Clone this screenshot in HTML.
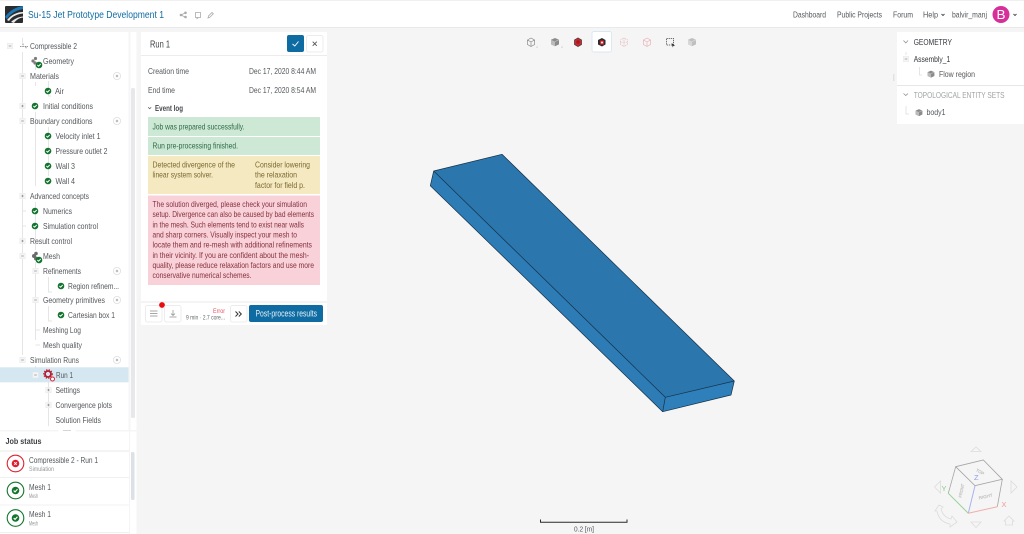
<!DOCTYPE html>
<html><head><meta charset="utf-8"><title>Su-15 Jet Prototype Development 1</title>
<style>
html,body{margin:0;padding:0;width:1024px;height:534px;overflow:hidden;background:#f5f5f5}
svg{display:block}
text{font-family:"Liberation Sans",sans-serif;font-size:8.7px;fill:#54585c;white-space:pre;filter:blur(.2px)}
.n{font-size:8.7px;fill:#54585c}
.b{font-weight:bold}
.g{fill:#2f6b48}.y{fill:#7a6a2e}.r{fill:#87303f}
.s{font-size:6.300px;fill:#94969a}
.l{stroke:#e4e5e6;stroke-width:1;fill:none}
</style></head><body>
<svg width="1024" height="534" viewBox="0 0 1024 534" xmlns="http://www.w3.org/2000/svg">
<defs>
<g id="ok"><circle r="3.3" fill="#14742f"/><path d="M-1.6 0L-.4 1.2L1.7-1.1" stroke="#fff" stroke-width="1" fill="none"/></g>
<g id="plus"><circle r="3.6" fill="#fff" stroke="#dedfe0" stroke-width=".8"/><path d="M-1.3 0H1.3M0-1.3V1.3" stroke="#777" stroke-width=".6"/></g>
<g id="minus"><rect x="-2.7" y="-2.7" width="5.4" height="5.4" fill="#f5f5f5" stroke="#ebebeb" stroke-width=".6"/><path d="M-1.3 0H1.3" stroke="#777" stroke-width=".6"/></g>
<g id="exp"><rect x="-2.7" y="-2.7" width="5.4" height="5.4" fill="#f5f5f5" stroke="#ebebeb" stroke-width=".6"/><path d="M-1.3 0H1.3M0-1.3V1.3" stroke="#777" stroke-width=".6"/></g>
<g id="cube"><path d="M-4-2.2L0-4L4-2.2V2.4L0 4.2L-4 2.4Z" fill="#8b8b8b"/><path d="M-4-2.2L0-.4V4.2L-4 2.4Z" fill="#bbb"/><path d="M0-.4L4-2.2" stroke="#eee" stroke-width=".4"/></g>
</defs>

<!-- header -->
<rect width="1024" height="27" fill="#fff"/>
<rect y="0" width="1024" height="1" fill="#f0f0f0"/>
<rect y="27" width="1024" height="1" fill="#e9e9e9"/>
<rect x="5" y="6" width="18" height="17" rx="1" fill="#2a2c30"/>
<path d="M5 17C10 10 16 7 23 6V9C17 10 11 13 7 19Z" fill="#1b78b4"/>
<path d="M7 20C11 15 17 12 23 12V13.5C18 14 12 16 9 21ZM11 22C14 19 18 17 23 16.500V17.500C19 18 16 20 14 23Z" fill="#e8e8e8"/>
<text x="28" y="18" textLength="136" lengthAdjust="spacingAndGlyphs" style="font-size:10.500px;fill:#0f6ca3">Su-15 Jet Prototype Development 1</text>
<g fill="none" stroke="#a8aaac" stroke-width=".8">
<path d="M185 13L181 15L185 17"/><circle cx="185.500" cy="12.800" r=".9" fill="#a8aaac"/><circle cx="185.500" cy="17" r=".9" fill="#a8aaac"/><circle cx="181" cy="15" r=".9" fill="#a8aaac"/>
<path d="M195.500 12.500H200.500V17.500H195.500ZM197 17.500V18.500L198.500 17.500"/>
<path d="M208 18L208.500 16L212 12.500L213.300 13.800L209.800 17.300Z"/>
</g>
<text class="n" x="793" y="17.500" textLength="33" lengthAdjust="spacingAndGlyphs">Dashboard</text>
<text class="n" x="837" y="17.500" textLength="45" lengthAdjust="spacingAndGlyphs">Public Projects</text>
<text class="n" x="893" y="17.500" textLength="20" lengthAdjust="spacingAndGlyphs">Forum</text>
<text class="n" x="923" y="17.500" textLength="15" lengthAdjust="spacingAndGlyphs">Help</text>
<path d="M941.500 14L943 15.500L944.500 14" stroke="#444" fill="none" stroke-width=".9"/>
<text class="n" x="952" y="17.500" textLength="35" lengthAdjust="spacingAndGlyphs">balvir_manj</text>
<circle cx="1001" cy="14.500" r="8.500" fill="#d62f99"/>
<text x="996.500" y="19" textLength="9" lengthAdjust="spacingAndGlyphs" style="font-size:13px;fill:#fff">B</text>
<path d="M1013.500 14L1015 15.500L1016.500 14" stroke="#444" fill="none" stroke-width=".9"/>

<!-- tree panel -->
<rect x="0" y="32" width="128.500" height="398" fill="#fff"/>
<rect x="130.500" y="32" width="6" height="398" fill="#fff"/>
<rect x="131" y="88" width="4" height="330" rx="1.500" fill="#e6e8ea"/>
<path class="l" d="M22.500 52V355M35.500 65V70M35.500 82V86M48.500 81V96H51M35.500 112V128M35.500 128V186M48.500 127V176M48.500 136H52M48.500 151H52M48.500 166H52M48.500 181H52M35.500 202V250M23 211H26M23 226H26M35.500 262V340M35.500 330H40M35.500 345H40M48.500 277V292H52M48.500 306V321H52M35.500 366V372M48.500 381V426"/>
<path class="l" d="M22.500 38V43"/>
<use href="#minus" x="10" y="46"/>
<use href="#minus" x="22.500" y="76"/>
<use href="#exp" x="22.500" y="106"/>
<use href="#minus" x="22.500" y="121"/>
<use href="#exp" x="22.500" y="196"/>
<use href="#exp" x="22.500" y="241"/>
<use href="#minus" x="22.500" y="256"/>
<use href="#minus" x="35.500" y="271"/>
<use href="#minus" x="35.500" y="300"/>
<use href="#minus" x="22.500" y="360"/>
<use href="#plus" x="117" y="76"/>
<use href="#plus" x="117" y="121"/>
<use href="#plus" x="117" y="271"/>
<use href="#plus" x="117" y="300"/>
<use href="#plus" x="117" y="360"/>
<rect x="0" y="367.300" width="128.500" height="15" fill="#d5e7f1"/>
<use href="#minus" x="35.500" y="375"/>
<use href="#exp" x="48.500" y="390"/>
<use href="#exp" x="48.500" y="405"/>

<path d="M20 46.500H28M23 43.500V46.500M26 46.500V49" stroke="#777" stroke-width=".8" fill="none" stroke-dasharray="1.500 .8"/>
<g fill="#7d7d7d"><circle cx="33" cy="61" r="1.600"/><circle cx="35.500" cy="58.500" r="1.600"/><circle cx="35" cy="63" r="1.600"/></g>
<use href="#ok" x="39" y="65"/>
<use href="#ok" x="48" y="91"/>
<use href="#ok" x="35" y="106"/>
<use href="#ok" x="48" y="136"/>
<use href="#ok" x="48" y="151"/>
<use href="#ok" x="48" y="166"/>
<use href="#ok" x="48" y="181"/>
<use href="#ok" x="35" y="211"/>
<use href="#ok" x="35" y="226"/>
<g fill="#6b6b6b"><circle cx="34" cy="256" r="2"/><circle cx="36" cy="253.500" r="1.800"/><circle cx="36" cy="258.500" r="2"/></g>
<use href="#ok" x="39" y="260"/>
<use href="#ok" x="61" y="286"/>
<use href="#ok" x="61" y="315"/>
<circle cx="48" cy="374" r="3" fill="none" stroke="#b71c30" stroke-width="1.800"/>
<circle cx="48" cy="374" r="4.300" fill="none" stroke="#b71c30" stroke-width="1" stroke-dasharray="1.300 1.300"/>
<circle cx="52.500" cy="379" r="2" fill="#fff" stroke="#d8202f" stroke-width="1"/>

<text class="n" x="30" y="49" textLength="47" lengthAdjust="spacingAndGlyphs">Compressible 2</text>
<text class="n" x="43" y="64" textLength="31" lengthAdjust="spacingAndGlyphs">Geometry</text>
<text class="n" x="30" y="79" textLength="29" lengthAdjust="spacingAndGlyphs">Materials</text>
<text class="n" x="55" y="94" textLength="9" lengthAdjust="spacingAndGlyphs">Air</text>
<text class="n" x="43" y="109" textLength="50" lengthAdjust="spacingAndGlyphs">Initial conditions</text>
<text class="n" x="30" y="124" textLength="62.500" lengthAdjust="spacingAndGlyphs">Boundary conditions</text>
<text class="n" x="55.500" y="139" textLength="45" lengthAdjust="spacingAndGlyphs">Velocity inlet 1</text>
<text class="n" x="55.500" y="154" textLength="52" lengthAdjust="spacingAndGlyphs">Pressure outlet 2</text>
<text class="n" x="55.500" y="169" textLength="19.500" lengthAdjust="spacingAndGlyphs">Wall 3</text>
<text class="n" x="55.500" y="184" textLength="19.500" lengthAdjust="spacingAndGlyphs">Wall 4</text>
<text class="n" x="30" y="199" textLength="59" lengthAdjust="spacingAndGlyphs">Advanced concepts</text>
<text class="n" x="43" y="214" textLength="29" lengthAdjust="spacingAndGlyphs">Numerics</text>
<text class="n" x="43" y="229" textLength="55" lengthAdjust="spacingAndGlyphs">Simulation control</text>
<text class="n" x="30" y="244" textLength="42" lengthAdjust="spacingAndGlyphs">Result control</text>
<text class="n" x="43" y="259" textLength="17" lengthAdjust="spacingAndGlyphs">Mesh</text>
<text class="n" x="43" y="274" textLength="38" lengthAdjust="spacingAndGlyphs">Refinements</text>
<text class="n" x="68" y="289" textLength="51" lengthAdjust="spacingAndGlyphs">Region refinem...</text>
<text class="n" x="43" y="303" textLength="62" lengthAdjust="spacingAndGlyphs">Geometry primitives</text>
<text class="n" x="68" y="318" textLength="47" lengthAdjust="spacingAndGlyphs">Cartesian box 1</text>
<text class="n" x="43" y="333" textLength="38" lengthAdjust="spacingAndGlyphs">Meshing Log</text>
<text class="n" x="43" y="348" textLength="39" lengthAdjust="spacingAndGlyphs">Mesh quality</text>
<text class="n" x="30" y="363" textLength="49" lengthAdjust="spacingAndGlyphs">Simulation Runs</text>
<text class="n" x="56" y="378" textLength="17" lengthAdjust="spacingAndGlyphs">Run 1</text>
<text class="n" x="55.500" y="393" textLength="24.500" lengthAdjust="spacingAndGlyphs">Settings</text>
<text class="n" x="55.500" y="408" textLength="56.500" lengthAdjust="spacingAndGlyphs">Convergence plots</text>
<text class="n" x="55.500" y="423" textLength="45.500" lengthAdjust="spacingAndGlyphs">Solution Fields</text>

<!-- job status -->
<rect x="0" y="431.500" width="136.500" height="102.500" fill="#fff"/>
<path d="M58 431.500Q60 428 63 428H71Q74 428 76 431.500Z" fill="#fff"/>
<path d="M63 430.500H71" stroke="#d5d5d5" stroke-width="1"/>
<rect x="0" y="450.500" width="129" height="1" fill="#eaeaea"/>
<rect x="0" y="477" width="129" height="1" fill="#f0f0f0"/>
<rect x="0" y="504.500" width="129" height="1" fill="#f0f0f0"/>
<rect x="0" y="532" width="129" height="1" fill="#f0f0f0"/>
<rect x="129" y="431.500" width="1" height="102.500" fill="#f4f4f4"/>
<rect x="131" y="452" width="3.500" height="48" rx="1.500" fill="#dbe1e4"/>
<text class="b" x="5.500" y="444" textLength="36" lengthAdjust="spacingAndGlyphs" style="font-size:8.500px;fill:#3c3f42">Job status</text>
<circle cx="15.500" cy="463.500" r="8.300" fill="#fff" stroke="#e0202f" stroke-width="1.100"/>
<circle cx="15.500" cy="463.500" r="3.800" fill="#e0202f"/>
<path d="M14.200 462.200L16.800 464.800M16.800 462.200L14.200 464.800" stroke="#fff" stroke-width=".9"/>
<circle cx="15.500" cy="490.500" r="8.300" fill="#fff" stroke="#14742f" stroke-width="1.100"/>
<use href="#ok" transform="translate(15.500 490.500) scale(1.150)"/>
<circle cx="15.500" cy="518" r="8.300" fill="#fff" stroke="#14742f" stroke-width="1.100"/>
<use href="#ok" transform="translate(15.500 518) scale(1.150)"/>
<text class="n" x="29" y="463" textLength="69" lengthAdjust="spacingAndGlyphs">Compressible 2 - Run 1</text>
<text class="s" x="29" y="471" textLength="25" lengthAdjust="spacingAndGlyphs">Simulation</text>
<text class="n" x="29" y="490" textLength="22" lengthAdjust="spacingAndGlyphs">Mesh 1</text>
<text class="s" x="29" y="498" textLength="9" lengthAdjust="spacingAndGlyphs">Mesh</text>
<text class="n" x="29" y="517" textLength="22" lengthAdjust="spacingAndGlyphs">Mesh 1</text>
<text class="s" x="29" y="525.500" textLength="9" lengthAdjust="spacingAndGlyphs">Mesh</text>

<!-- run panel -->
<rect x="141" y="32" width="186" height="293" fill="#fff"/>
<rect x="141" y="55" width="186" height="1" fill="#ececec"/>
<rect x="141" y="301.500" width="186" height="1" fill="#e8e8e8"/>
<text x="150" y="47.500" textLength="20" lengthAdjust="spacingAndGlyphs" style="font-size:10px;fill:#3f4245">Run 1</text>
<rect x="287" y="35" width="17" height="17" rx="2" fill="#0f6ca3"/>
<path d="M292.500 44L294.800 46L298.500 41.500" stroke="#fff" stroke-width=".9" fill="none"/>
<rect x="306.500" y="35.500" width="16.500" height="16.500" rx="2" fill="#fff" stroke="#ececec"/>
<path d="M312.700 41.700L316.800 45.800M316.800 41.700L312.700 45.800" stroke="#555" stroke-width=".9"/>
<text class="n" x="148" y="74" textLength="41" lengthAdjust="spacingAndGlyphs">Creation time</text>
<text class="n" x="249" y="74" textLength="67" lengthAdjust="spacingAndGlyphs">Dec 17, 2020 8:44 AM</text>
<text class="n" x="148" y="93" textLength="27" lengthAdjust="spacingAndGlyphs">End time</text>
<text class="n" x="249" y="93" textLength="67" lengthAdjust="spacingAndGlyphs">Dec 17, 2020 8:54 AM</text>
<path d="M148.200 107.200L149.700 108.700L151.200 107.200" stroke="#555" fill="none" stroke-width=".7"/>
<text class="b" x="155" y="111" textLength="28" lengthAdjust="spacingAndGlyphs" style="font-size:8.300px;fill:#45484b">Event log</text>
<rect x="148" y="117" width="172" height="19" fill="#cde8d5"/>
<rect x="148" y="137" width="172" height="18" fill="#cde8d5"/>
<rect x="148" y="156" width="172" height="38" fill="#f5e9c2"/>
<rect x="148" y="195.500" width="172" height="89.500" fill="#f8d2d8"/>
<text class="g" x="152.500" y="129.500" textLength="92" lengthAdjust="spacingAndGlyphs">Job was prepared successfully.</text>
<text class="g" x="152.500" y="148.500" textLength="85.500" lengthAdjust="spacingAndGlyphs">Run pre-processing finished.</text>
<text class="y" x="152.500" y="167.500" textLength="82.500" lengthAdjust="spacingAndGlyphs">Detected divergence of the</text>
<text class="y" x="152.500" y="177.500" textLength="60.500" lengthAdjust="spacingAndGlyphs">linear system solver.</text>
<text class="y" x="255" y="167.500" textLength="55" lengthAdjust="spacingAndGlyphs">Consider lowering</text>
<text class="y" x="255" y="177.500" textLength="42" lengthAdjust="spacingAndGlyphs">the relaxation</text>
<text class="y" x="255" y="188" textLength="50" lengthAdjust="spacingAndGlyphs">factor for field p.</text>
<text class="r" x="152.500" y="207" textLength="154.500" lengthAdjust="spacingAndGlyphs">The solution diverged, please check your simulation</text>
<text class="r" x="152.500" y="217" textLength="161.500" lengthAdjust="spacingAndGlyphs">setup. Divergence can also be caused by bad elements</text>
<text class="r" x="152.500" y="227.500" textLength="151.500" lengthAdjust="spacingAndGlyphs">in the mesh. Such elements tend to exist near walls</text>
<text class="r" x="152.500" y="237.500" textLength="144.500" lengthAdjust="spacingAndGlyphs">and sharp corners. Visually inspect your mesh to</text>
<text class="r" x="152.500" y="247.500" textLength="159.500" lengthAdjust="spacingAndGlyphs">locate them and re-mesh with additional refinements</text>
<text class="r" x="152.500" y="258" textLength="156.500" lengthAdjust="spacingAndGlyphs">in their vicinity. If you are confident about the mesh-</text>
<text class="r" x="152.500" y="268" textLength="161.500" lengthAdjust="spacingAndGlyphs">quality, please reduce relaxation factors and use more</text>
<text class="r" x="152.500" y="278" textLength="99" lengthAdjust="spacingAndGlyphs">conservative numerical schemes.</text>

<rect x="145.500" y="305.500" width="16.500" height="16.500" rx="2" fill="#fff" stroke="#ececec"/>
<path d="M150 311H157.500M150 313.500H157.500M150 316H157.500" stroke="#8a8a8a" stroke-width=".7"/>
<circle cx="162" cy="305" r="2.900" fill="#e90e0e"/>
<rect x="164.500" y="305.500" width="16.500" height="16.500" rx="2" fill="#fff" stroke="#ececec"/>
<path d="M173 310V315M171 313.500L173 315.500L175 313.500M169.500 317H176.500" stroke="#8a8a8a" stroke-width=".7" fill="none"/>
<text x="213" y="313" textLength="12" lengthAdjust="spacingAndGlyphs" style="font-size:6.300px;fill:#e8505f">Error</text>
<text class="s" x="186" y="319.500" textLength="39" lengthAdjust="spacingAndGlyphs" style="fill:#66696c">9 min · 2.7 core...</text>
<rect x="230.500" y="305.500" width="16.500" height="16.500" rx="2" fill="#fff" stroke="#ececec"/>
<path d="M235.500 311.500L238 314L235.500 316.500M238.800 311.500L241.300 314L238.800 316.500" stroke="#333" stroke-width="1" fill="none"/>
<rect x="249" y="305" width="74" height="17" rx="2" fill="#0f6ca3"/>
<text x="255.500" y="316.500" textLength="61.500" lengthAdjust="spacingAndGlyphs" style="font-size:9px;fill:#e9f2f7">Post-process results</text>

<!-- toolbar -->
<rect x="592" y="31.500" width="19.500" height="20.500" rx="2" fill="#fff" stroke="#d8e8f2" stroke-width=".9"/>
<g fill="none" stroke="#8a8a8a" stroke-width=".7"><path d="M527.500 40L531 38L534.500 40V44.500L531 46.500L527.500 44.500ZM527.500 40L531 42V46.500M531 42L534.500 40"/></g>
<path d="M536 47.500L537.500 46V47.500Z" fill="#bbb"/>
<use href="#cube" x="555" y="42"/>
<path d="M561 47.500L562.500 46V47.500Z" fill="#bbb"/>
<path d="M574.500 40L578 38L581.500 40V44.500L578 46.500L574.500 44.500Z" fill="#d7232c" stroke="#444" stroke-width=".8"/>
<circle cx="578" cy="42" r="1.700" fill="#a5161e"/>
<path d="M598 40L602 38L605.500 40V44.500L602 46.500L598 44.500Z" fill="#2b2d30"/>
<path d="M600 40.500H604V44.500H600Z" fill="#d7232c"/><circle cx="602" cy="42.500" r="1" fill="#fff"/>
<g fill="none" stroke="#e4b0b5" stroke-width=".7"><path d="M620.500 40L624 38L627.500 40V44.500L624 46.500L620.500 44.500Z" stroke-dasharray="1 .8"/><path d="M624 38V46.500M620.500 42.200H627.500" stroke-dasharray="1 .8"/>
<path d="M643.500 40L647 38L650.500 40V44.500L647 46.500L643.500 44.500ZM643.500 40L647 42L650.500 40M647 42V46.500" stroke="#e8b4b8"/></g>
<rect x="666.500" y="38.500" width="7" height="6.500" fill="none" stroke="#444" stroke-width=".8" stroke-dasharray="1.300 .8"/>
<path d="M671.500 43L675 45.500L673.300 46L672.800 47.500Z" fill="#333"/>
<use href="#cube" x="692" y="42" opacity=".5"/>

<!-- model -->
<path d="M433.700 171L502 154.300L734.300 381L665.300 397.300Z" fill="#2b76ac"/>
<path d="M433.700 171L430.300 185.700L662.700 411.700L665.300 397.300Z" fill="#2d7cb5"/>
<path d="M665.300 397.300L734.300 381L731 395L662.700 411.700Z" fill="#2f80ba"/>
<path d="M433.700 171L502 154.300L734.300 381L731 395L662.700 411.700L430.300 185.700ZM433.700 171L665.300 397.300L734.300 381M665.300 397.300L662.700 411.700" fill="none" stroke="#143048" stroke-width=".7" stroke-linejoin="round"/>

<!-- geometry panel -->
<rect x="897" y="32" width="127" height="92" fill="#fff"/>
<rect x="897" y="85" width="127" height="1" fill="#e6e6e6"/>
<rect x="893" y="74" width="1.500" height="7" fill="#dfe3e6"/>
<path d="M903.500 40.500L905.800 43L908 40.500M903.500 93.500L905.800 95.500L908 93.500" stroke="#888" fill="none" stroke-width=".7"/>
<text x="913.700" y="45" textLength="38.300" lengthAdjust="spacingAndGlyphs" style="font-size:8.500px;fill:#33363a">GEOMETRY</text>
<use href="#minus" x="906" y="59"/>
<path class="l" d="M906 52V55M919.500 67V75H922M906 106V114H909"/>
<text x="913.700" y="62" textLength="36.500" lengthAdjust="spacingAndGlyphs" style="font-size:8.700px;fill:#33363a">Assembly_1</text>
<use href="#cube" transform="translate(931 74) scale(.85)"/>
<text class="n" x="939" y="77" textLength="36" lengthAdjust="spacingAndGlyphs">Flow region</text>
<text x="913.700" y="98" textLength="90.800" lengthAdjust="spacingAndGlyphs" style="font-size:8.500px;fill:#a0a2a4">TOPOLOGICAL ENTITY SETS</text>
<use href="#cube" transform="translate(919 112.500) scale(.85)"/>
<text class="n" x="926.500" y="115" textLength="19" lengthAdjust="spacingAndGlyphs">body1</text>

<!-- gizmo -->
<g fill="none" stroke="#a4a4a4" stroke-width=".8">
<path d="M955.700 466.700L983.300 460L1002.300 479.300L975 485.700ZM955.700 466.700L948.300 493.300M1002.300 479.300L997.300 506.700"/>
</g>
<path d="M975 485.700L968.300 513.300" stroke="#a8b2f0" stroke-width="1"/>
<path d="M968.300 513.300L948.300 493.300" stroke="#96d294" stroke-width="1"/>
<path d="M968.300 513.300L997.300 506.700" stroke="#f2acac" stroke-width="1"/>
<text x="941.500" y="491" style="font-size:7.500px;fill:#86c984">Y</text>
<text x="974" y="480" style="font-size:7.500px;fill:#8f9cec">Z</text>
<text x="1001.500" y="507" style="font-size:7.500px;fill:#f09a9a">X</text>
<text transform="translate(963 491) rotate(-78)" x="-7" y="0" textLength="14" lengthAdjust="spacingAndGlyphs" style="font-size:4.300px;fill:#a4a4a4">FRONT</text>
<text transform="translate(986 498) rotate(-13)" x="-7" y="0" textLength="14" lengthAdjust="spacingAndGlyphs" style="font-size:4.300px;fill:#a4a4a4">RIGHT</text>
<text transform="translate(979 473) rotate(30)" x="-4" y="0" style="font-size:4.300px;fill:#a4a4a4">TOP</text>
<g fill="#f5f5f5" stroke="#dcdcdc" stroke-width=".8">
<path d="M934.500 487L940.500 481V493Z"/>
<path d="M1017 487L1011 481V493Z"/>
<path d="M971 522H981L976 527.500Z"/>
<path d="M971 451.500H981L976 447Z"/>
<path d="M1004 521L1009 516L1014 521H1012.500V525H1005.500V521Z"/>
<path d="M935 511L939 505L943 507L941 509Q943 517 951 519L952 516L957 522L950 527L950 524Q939 522 937 511Z"/>
</g>

<!-- scale -->
<path d="M540.500 519.500V522.300H627V519.500" fill="none" stroke="#2a2a2a" stroke-width="1"/>
<text class="n" x="574" y="531.500" textLength="20" lengthAdjust="spacingAndGlyphs" style="font-size:7.500px">0.2 [m]</text>
</svg>
</body></html>
